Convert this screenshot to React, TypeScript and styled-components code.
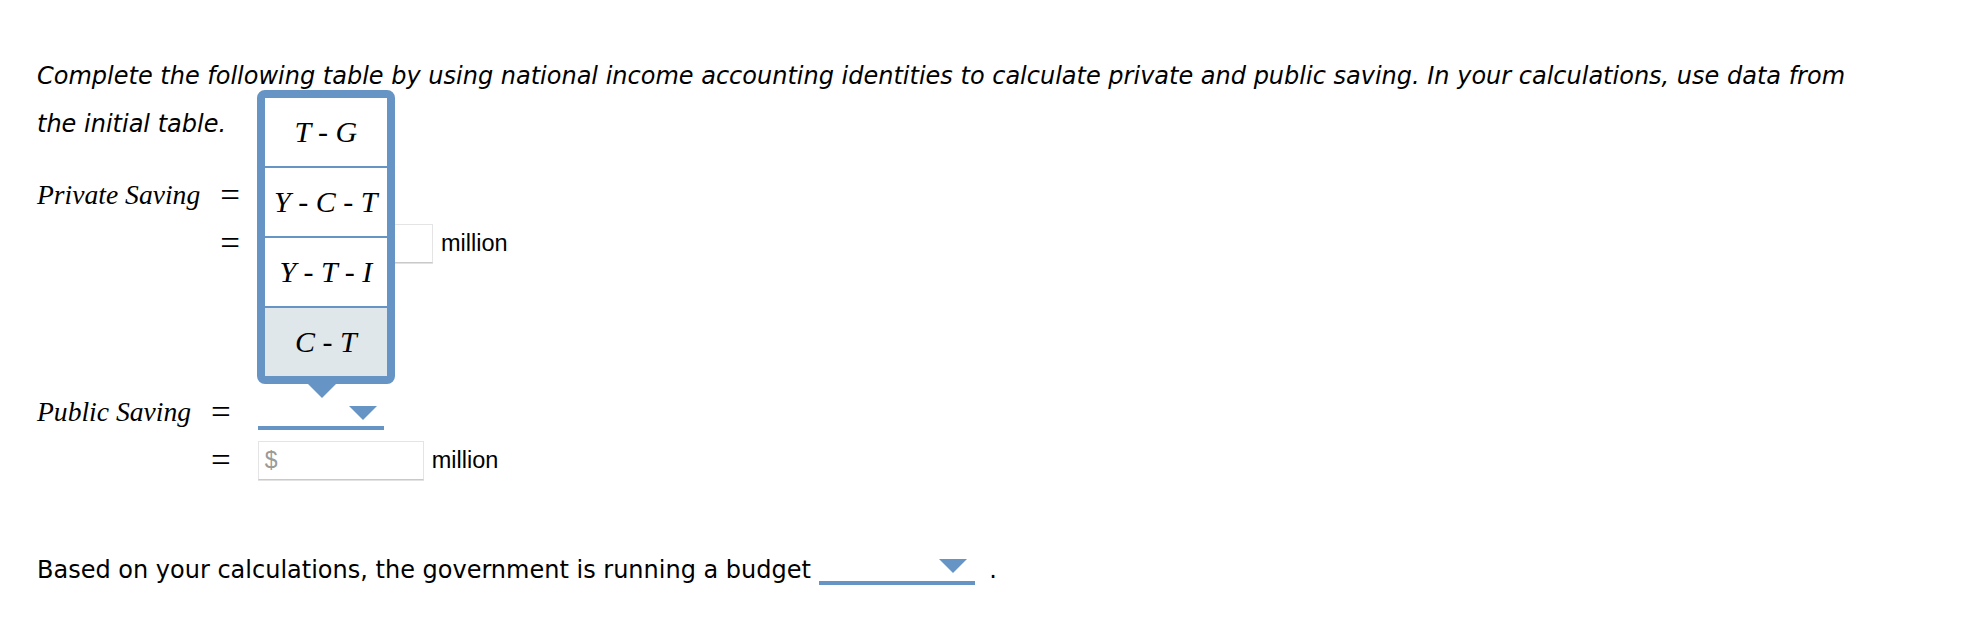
import React from "react"
import styled, { createGlobalStyle } from "styled-components"

const BLUE = "#6594c5"

const GlobalStyle = createGlobalStyle`
    body {
        margin: 0;
        background: #ffffff;
        color: #000000;
        font-family: "DejaVu Sans", Verdana, sans-serif;
    }
`

const Page = styled.div`
    display: flex;
    flex-direction: column;

    padding: 52px 0 0 37px;
`

const Intro = styled.p`
    max-width: 1840px;
    margin: 0;

    font-size: 24px;
    font-style: italic;
    line-height: 48px;
`

const Equation = styled.div<{ $top: number }>`
    display: grid;
    grid-template-columns: auto auto auto;
    grid-auto-rows: 48px;
    justify-content: start;
    align-items: center;

    margin-top: ${(p) => p.$top}px;
`

const Label = styled.span`
    padding-right: 20px;

    font-family: "Liberation Serif", "Times New Roman", serif;
    font-size: 27.6px;
    font-style: italic;
`

const Equals = styled.span`
    font-family: "Liberation Serif", "Times New Roman", serif;
    font-size: 35px;
    line-height: 1;
`

const Cell = styled.div`
    display: flex;
    align-items: center;

    margin-left: 27px;
`

const Select = styled.div<{ $width: number }>`
    position: relative;
    display: inline-flex;
    justify-content: flex-end;
    align-items: flex-end;
    box-sizing: border-box;

    width: ${(p) => p.$width}px;
    height: 36px;
    padding: 0 7px 6px 0;

    border-bottom: 4px solid ${BLUE};
`

const InlineSelect = styled(Select)`
    height: 30px;
    padding: 0 8px 8px 0;
    margin-right: 7px;

    vertical-align: 5px;
`

const Caret = styled.span`
    width: 0;
    height: 0;

    border-left: 14px solid transparent;
    border-right: 14px solid transparent;
    border-top: 14px solid ${BLUE};
`

const Popover = styled.div`
    position: absolute;
    left: -1px;
    bottom: 42px;
    z-index: 2;

    display: flex;
    flex-direction: column;

    width: 122px;

    border: 8px solid ${BLUE};
    border-radius: 8px;

    background: #ffffff;

    &::after {
        content: "";
        position: absolute;
        top: calc(100% + 7px);
        left: 42px;

        border-left: 15px solid transparent;
        border-right: 15px solid transparent;
        border-top: 15px solid ${BLUE};
    }
`

const Option = styled.div<{ $active?: boolean }>`
    display: flex;
    justify-content: center;
    align-items: center;

    height: 68px;

    background: ${(p) => (p.$active ? "#e0e7ea" : "#ffffff")};

    font-family: "Liberation Serif", "Times New Roman", serif;
    font-size: 30px;
    font-style: italic;
    white-space: pre;

    & + & {
        border-top: 2px solid ${BLUE};
    }
`

const MoneyBox = styled.label`
    display: flex;
    align-items: center;
    box-sizing: border-box;

    width: 166px;
    height: 39px;
    padding-left: 6px;

    border: 1px solid #e4e4e4;
    border-bottom-color: #c9c9c9;
    box-shadow: 0 1px 0 #e2e2e2;

    background: #ffffff;
`

const Currency = styled.span`
    color: #9a9a9a;

    font-family: "Liberation Sans", Arial, sans-serif;
    font-size: 23px;
`

const Field = styled.input`
    flex: 1;
    min-width: 0;

    border: none;
    outline: none;
    background: transparent;

    font-family: "Liberation Sans", Arial, sans-serif;
    font-size: 22px;
`

const Unit = styled.span`
    margin-left: 8px;

    font-family: "Liberation Sans", Arial, sans-serif;
    font-size: 23.5px;
`

const Sentence = styled.p`
    margin: 62px 0 0;

    font-size: 24px;
    line-height: 48px;
`

const options = ["T - G", "Y - C - T", "Y - T - I", "C - T"]

const Money = () => (
    <Cell>
        <MoneyBox>
            <Currency>$</Currency>
            <Field type="text" />
        </MoneyBox>
        <Unit>million</Unit>
    </Cell>
)

export default function App() {
    return (
        <>
            <GlobalStyle />
            <Page>
                <Intro>
                    Complete the following table by using national income accounting identities to calculate private and
                    public saving. In your calculations, use data from the initial table.
                </Intro>

                <Equation $top={23}>
                    <Label>Private Saving</Label>
                    <Equals>=</Equals>
                    <Cell>
                        <Select $width={126}>
                            <Caret />
                        </Select>
                    </Cell>
                    <span />
                    <Equals>=</Equals>
                    <Money />
                </Equation>

                <Equation $top={121}>
                    <Label>Public Saving</Label>
                    <Equals>=</Equals>
                    <Cell>
                        <Select $width={126}>
                            <Caret />
                            <Popover>
                                {options.map((o, i) => (
                                    <Option key={o} $active={i === options.length - 1}>
                                        {o}
                                    </Option>
                                ))}
                            </Popover>
                        </Select>
                    </Cell>
                    <span />
                    <Equals>=</Equals>
                    <Money />
                </Equation>

                <Sentence>
                    Based on your calculations, the government is running a budget{" "}
                    <InlineSelect $width={156}>
                        <Caret />
                    </InlineSelect>{" "}
                    .
                </Sentence>
            </Page>
        </>
    )
}
